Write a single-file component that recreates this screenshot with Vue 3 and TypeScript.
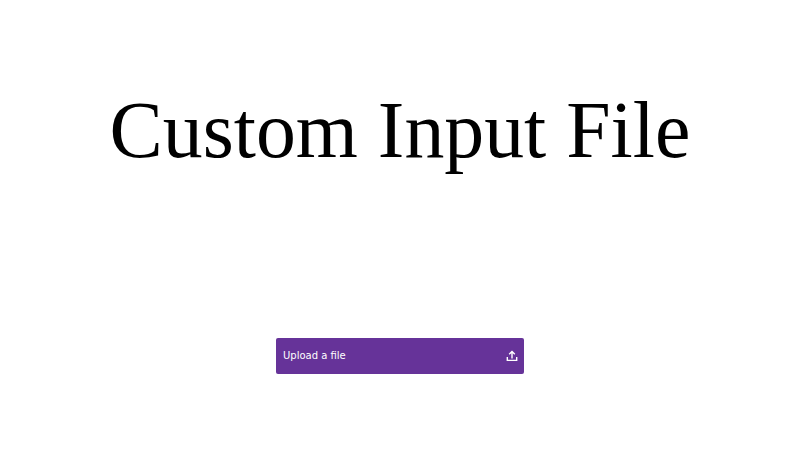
<script setup lang="ts">
import { ref } from 'vue'

const label = ref<string>('Upload a file')

function onChange(event: Event): void {
  const input = event.target as HTMLInputElement
  label.value = input.files?.[0]?.name ?? 'Upload a file'
}
</script>

<template>
  <main class="page">
    <h1 class="title">Custom Input File</h1>
    <label class="upload">
      <input class="upload-input" type="file" @change="onChange" />
      <span class="upload-label">{{ label }}</span>
      <svg class="upload-icon" viewBox="0 0 12 12" fill="none" stroke="currentColor" stroke-width="1.4">
        <path d="M1.3 7V10.4H10.7V7M6 8.5V1.5M3.2 4.2L6 1.4L8.8 4.2" />
      </svg>
    </label>
  </main>
</template>

<style>
body {
  background: #fff;
}
</style>

<style scoped>
.page {
  box-sizing: border-box;
  height: 450px;
  padding-top: 84px;
  display: flex;
  flex-direction: column;
  align-items: center;
}
.title {
  margin: 0 0 162px;
  font: 400 79.8px/92px "Liberation Serif", serif;
  color: #000;
  white-space: nowrap;
}
.upload {
  box-sizing: border-box;
  display: flex;
  align-items: center;
  justify-content: space-between;
  width: 248.6px;
  height: 36.4px;
  padding: 0 6px 0 7.3px;
  border-radius: 2px;
  background: #663399;
  color: #fff;
  cursor: pointer;
}
.upload-input {
  display: none;
}
.upload-label {
  font: 10px/12px "DejaVu Sans", sans-serif;
}
.upload-icon {
  width: 12px;
  height: 12px;
  margin-bottom: 1px;
}
</style>
